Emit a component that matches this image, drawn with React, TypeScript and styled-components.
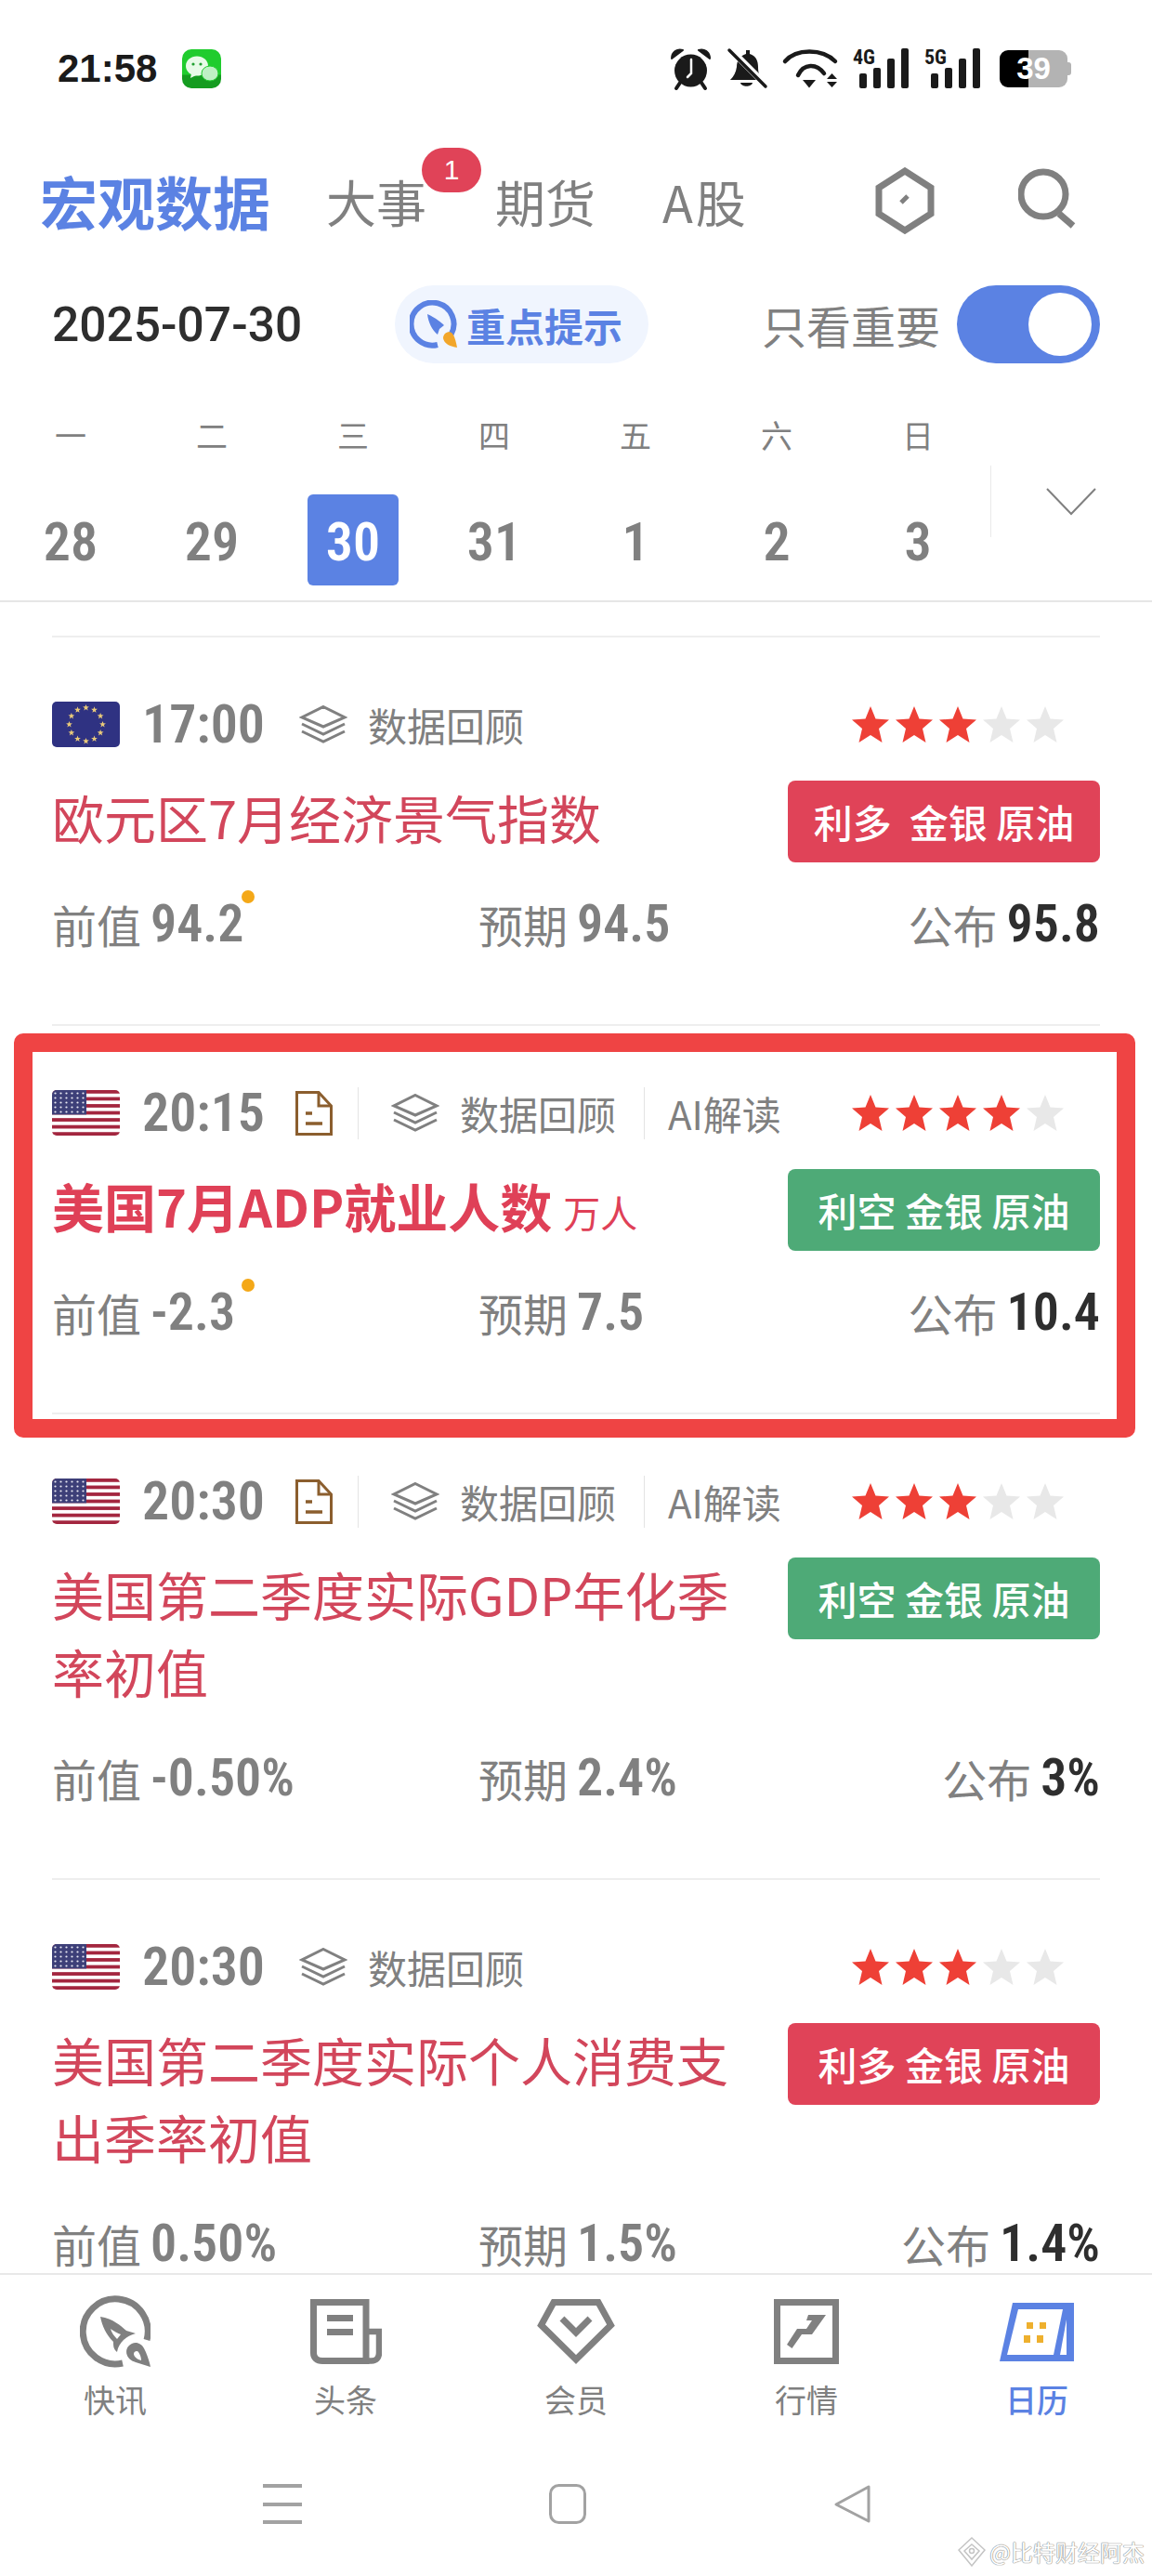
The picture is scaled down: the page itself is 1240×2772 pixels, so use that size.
import React from 'react';
import styled, { createGlobalStyle } from 'styled-components';

const BLUE = '#5b82e3';
const GRAY = '#808080';
const RED = '#e04358';
const GREEN = '#4eaa77';
const CJK = '"Noto Sans CJK SC", "Noto Sans", sans-serif';
const NARROW = 'Roboto, "Liberation Sans", sans-serif';

const Global = createGlobalStyle`
  html, body { margin: 0; padding: 0; background: #fff; }
  body { font-family: ${CJK}; }
`;

const Page = styled.div`
  position: relative;
  width: 1240px;
  height: 2772px;
  display: flex;
  flex-direction: column;
  overflow: hidden;
  background: #fff;
`;

/* ---------- status bar ---------- */
const StatusBar = styled.div`
  height: 148px;
  flex: none;
  display: flex;
  align-items: center;
  padding: 0 87px 0 62px;
  box-sizing: border-box;
`;
const Clock = styled.span`
  font: bold 42px/1 "Liberation Sans", sans-serif;
  color: #1a1a1a;
  width: 134px;
`;
const StatusIcons = styled.div`
  margin-left: auto;
  display: flex;
  align-items: center;
`;
const StatusIcon = styled.svg<{ $ml?: number }>`
  display: block;
  overflow: visible;
  margin-left: ${p => p.$ml ?? 0}px;
`;
const Battery = styled.div`
  position: relative;
  width: 73px;
  height: 40px;
  margin-left: 20px;
  margin-right: 4px;
  border-radius: 9px;
  background: linear-gradient(to right, #000 31px, #b3b3b3 31px);
  color: #fff;
  font: bold 33px/40px "Liberation Sans", sans-serif;
  text-align: center;
  &::after {
    content: '';
    position: absolute;
    right: -4px;
    top: 13px;
    width: 4px;
    height: 14px;
    border-radius: 0 3px 3px 0;
    background: #b3b3b3;
  }
`;

/* ---------- top nav ---------- */
const TopNav = styled.div`
  height: 136px;
  flex: none;
  display: flex;
  align-items: center;
  padding: 0 82px 0 43px;
  box-sizing: border-box;
`;
const NavActive = styled.span`
  font-size: 62px;
  line-height: 80px;
  font-weight: 700;
  color: ${BLUE};
`;
const NavTab = styled.span<{ $ml: number; $spaced?: boolean }>`
  position: relative;
  font-size: 54px;
  line-height: 80px;
  color: ${GRAY};
  margin-left: ${p => p.$ml}px;
  margin-top: 2px;
  letter-spacing: ${p => (p.$spaced ? 3 : 0)}px;
`;
const Badge = styled.span`
  position: absolute;
  left: 103px;
  top: -18px;
  width: 64px;
  height: 48px;
  border-radius: 24px;
  background: ${RED};
  color: #fff;
  font: 30px/48px "Liberation Sans", sans-serif;
  text-align: center;
`;
const NavIcons = styled.div`
  margin-left: auto;
  display: flex;
  gap: 90px;
`;
const BlockSvg = styled.svg`
  display: block;
`;

/* ---------- date row ---------- */
const DateRow = styled.div`
  flex: none;
  height: 84px;
  margin-top: 23px;
  padding: 0 56px;
  display: flex;
  align-items: center;
`;
const DateText = styled.span`
  width: 369px;
  margin-top: 2px;
  font: 500 51.5px/1 Roboto, sans-serif;
  color: #2e2e2e;
`;
const HintPill = styled.div`
  width: 273px;
  height: 84px;
  box-sizing: border-box;
  padding-left: 16px;
  border-radius: 42px;
  background: #f0f5fe;
  display: flex;
  align-items: center;
  gap: 9px;
  font-size: 42px;
  font-weight: 700;
  color: ${BLUE};
`;
const OnlyImportant = styled.div`
  margin-left: auto;
  display: flex;
  align-items: center;
  gap: 18px;
  font-size: 48px;
  color: ${GRAY};
`;
const Toggle = styled.div`
  position: relative;
  width: 154px;
  height: 84px;
  border-radius: 42px;
  background: ${BLUE};
  &::after {
    content: '';
    position: absolute;
    right: 9px;
    top: 8px;
    width: 68px;
    height: 68px;
    border-radius: 50%;
    background: #fff;
  }
`;

/* ---------- calendar ---------- */
const Calendar = styled.div`
  flex: none;
  margin-top: 58px;
  display: flex;
  padding-bottom: 16px;
  border-bottom: 2px solid #e6e6e6;
`;
const Days = styled.div`
  width: 1064px;
`;
const WeekRow = styled.div`
  display: grid;
  grid-template-columns: repeat(7, 152px);
  height: 40px;
  margin-bottom: 43px;
`;
const WeekCell = styled.span`
  font-size: 34px;
  line-height: 38px;
  color: ${GRAY};
  text-align: center;
`;
const DayRow = styled.div`
  display: grid;
  grid-template-columns: repeat(7, 152px);
  height: 98px;
`;
const DayCell = styled.div<{ $on?: boolean }>`
  justify-self: center;
  width: 98px;
  height: 98px;
  border-radius: 6px;
  background: ${p => (p.$on ? BLUE : 'transparent')};
  color: ${p => (p.$on ? '#fff' : GRAY)};
  font: 600 58px/102px ${NARROW};
  font-stretch: 75%;
  text-align: center;
`;
const Expand = styled.div`
  margin: 52px 0 0 2px;
  width: 172px;
  height: 77px;
  border-left: 1px solid #eaeaea;
  display: flex;
  align-items: center;
  justify-content: center;
`;

/* ---------- list ---------- */
const List = styled.div`
  flex: 1;
  min-height: 0;
  overflow: hidden;
  margin-top: 36px;
  padding: 0 56px;
`;
const Card = styled.div`
  position: relative;
  border-top: 2px solid #eeeeee;
  padding: 69px 0 78px;
`;
const Highlight = styled.div`
  position: absolute;
  left: -41px;
  top: 8px;
  width: 1207px;
  height: 435px;
  box-sizing: border-box;
  border: 20px solid #ef4444;
  border-radius: 10px;
  pointer-events: none;
`;
const Meta = styled.div`
  height: 49px;
  display: flex;
  align-items: center;
`;
const Flag = styled.svg`
  display: block;
  flex: none;
  border-radius: 5px;
`;
const Time = styled.span`
  width: 122px;
  margin-left: 24px;
  font: 600 58px/49px ${NARROW};
  font-stretch: 75%;
  color: ${GRAY};
  white-space: nowrap;
`;
const MetaSvg = styled.svg<{ $ml: number }>`
  display: block;
  flex: none;
  margin-left: ${p => p.$ml}px;
`;
const Sep = styled.span<{ $ml: number }>`
  flex: none;
  width: 1px;
  height: 56px;
  background: #e4e4e4;
  margin-left: ${p => p.$ml}px;
`;
const MetaText = styled.span<{ $ml: number }>`
  margin-left: ${p => p.$ml}px;
  font-size: 42px;
  line-height: 49px;
  color: ${GRAY};
  white-space: nowrap;
`;
const Stars = styled.div`
  margin-left: auto;
  margin-right: 39px;
  display: flex;
  gap: 7px;
`;
const Body = styled.div`
  margin-top: 36px;
  display: flex;
  justify-content: space-between;
  align-items: flex-start;
`;
const Title = styled.div<{ $strong?: boolean }>`
  width: 770px;
  margin-top: -3px;
  font-size: 56px;
  line-height: 83px;
  padding-bottom: 9px;
  color: ${p => (p.$strong ? '#df4057' : '#d2465b')};
  font-weight: ${p => (p.$strong ? 700 : 400)};
`;
const Unit = styled.span`
  margin-left: 12px;
  font-size: 40px;
  line-height: 40px;
  font-weight: 400;
`;
const Impact = styled.div<{ $bull: boolean }>`
  flex: none;
  width: 336px;
  height: 88px;
  border-radius: 8px;
  background: ${p => (p.$bull ? RED : GREEN)};
  color: #fff;
  font-size: 42px;
  font-weight: 500;
  line-height: 88px;
  text-align: center;
  white-space: pre;
`;
const Stats = styled.div`
  margin-top: 35px;
  height: 60px;
  display: grid;
  grid-template-columns: 459px 1fr auto;
  align-items: center;
`;
const Stat = styled.div`
  position: relative;
  display: flex;
  align-items: center;
  height: 60px;
  font-size: 48px;
  line-height: 60px;
  color: ${GRAY};
`;
const StatValue = styled.span<{ $dark?: boolean }>`
  margin-left: 10px;
  font: 600 56px/60px ${NARROW};
  font-stretch: 75%;
  color: ${p => (p.$dark ? '#2e2e2e' : GRAY)};
`;
const Dot = styled.span`
  position: absolute;
  left: 204px;
  top: -6px;
  width: 14px;
  height: 14px;
  border-radius: 50%;
  background: #f4a818;
`;

/* ---------- tab bar ---------- */
const TabBar = styled.div`
  flex: none;
  height: 194px;
  box-sizing: border-box;
  border-top: 2px solid #e8e8e8;
  background: #fff;
  padding-top: 22px;
  display: grid;
  grid-template-columns: repeat(5, 248px);
`;
const Tab = styled.div<{ $on?: boolean }>`
  display: flex;
  flex-direction: column;
  align-items: center;
  font-size: 34px;
  line-height: 40px;
  font-weight: ${p => (p.$on ? 500 : 400)};
  color: ${p => (p.$on ? BLUE : GRAY)};
`;
const TabIconBox = styled.div`
  height: 78px;
  margin-bottom: 14px;
  display: flex;
  align-items: center;
  justify-content: center;
`;

/* ---------- system bar ---------- */
const SystemBar = styled.div`
  flex: none;
  height: 132px;
  box-sizing: border-box;
  padding: 33px 0 0 283px;
  display: flex;
  align-items: flex-start;
  gap: 266px;
`;
const Watermark = styled.div`
  position: absolute;
  right: 8px;
  bottom: 10px;
  display: flex;
  align-items: center;
  gap: 4px;
  font-size: 24px;
  line-height: 30px;
  color: #fff;
  text-shadow: 0 0 1px #8a8a8a, 0 0 1px #8a8a8a, 0 0 1px #8a8a8a;
`;

/* ---------- drawings ---------- */
const WeChat = () => (
  <StatusIcon width="42" height="42" viewBox="0 0 42 42">
    <defs>
      <linearGradient id="wc" x1="0" y1="0" x2="0" y2="1">
        <stop offset="0" stopColor="#20cc2e" />
        <stop offset="0.65" stopColor="#20cc2e" />
        <stop offset="0.66" stopColor="#159c20" />
        <stop offset="1" stopColor="#159c20" />
      </linearGradient>
    </defs>
    <rect width="42" height="42" rx="10" fill="url(#wc)" />
    <ellipse cx="16" cy="18" rx="12" ry="10.5" fill="#e8fbe8" />
    <path d="M10 26l-1 5 6-3z" fill="#e8fbe8" />
    <ellipse cx="30" cy="26" rx="9" ry="8" fill="#bff0c4" stroke="#20cc2e" strokeWidth="1" />
    <circle cx="12" cy="16" r="1.6" fill="#20a030" />
    <circle cx="20" cy="16" r="1.6" fill="#20a030" />
  </StatusIcon>
);

const Alarm = () => (
  <StatusIcon width="43" height="44" viewBox="0 0 43 44" fill="#1a1a1a">
    <path d="M1 11 C1 4 7 0 13 2 Z" stroke="#1a1a1a" strokeWidth="2" strokeLinejoin="round" />
    <path d="M42 11 C42 4 36 0 30 2 Z" stroke="#1a1a1a" strokeWidth="2" strokeLinejoin="round" />
    <circle cx="21.5" cy="24" r="17.5" />
    <path d="M10 37l-4 6M33 37l4 6" stroke="#1a1a1a" strokeWidth="4" strokeLinecap="round" />
    <path d="M22 12v15l-4 4" stroke="#fff" strokeWidth="2.5" fill="none" strokeLinecap="round" />
  </StatusIcon>
);

const BellOff = () => (
  <StatusIcon $ml={18} width="42" height="42" viewBox="0 0 42 42" fill="#1a1a1a">
    <path d="M20 1h4v4c7 2 9 8 9 14 0 6 1 9 5 14H3c4-4 6-8 7-14 0-6 3-12 10-14z" />
    <path d="M14 36h13c-1 5-12 5-13 0z" />
    <path d="M3 0L42 39" stroke="#fff" strokeWidth="7" />
    <path d="M2 1L41 40" stroke="#1a1a1a" strokeWidth="3.5" strokeLinecap="round" />
  </StatusIcon>
);

const Wifi = () => (
  <StatusIcon $ml={18} width="59" height="42" viewBox="0 0 59 42" fill="#1a1a1a">
    <path d="M2 13 C14 -1 42 -1 56 13" stroke="#1a1a1a" strokeWidth="4.5" fill="none" strokeLinecap="round" />
    <path d="M16 28 C22 15 36 15 44 26" stroke="#1a1a1a" strokeWidth="4.5" fill="none" strokeLinecap="round" />
    <path d="M21 33h14l-7 8.5z" />
    <path d="M47 32l5.5-6 5.5 6zM47 35l5.5 6 5.5-6z" />
  </StatusIcon>
);

const Signal = ({ label }: { label: string }) => (
  <StatusIcon $ml={16} width="61" height="44" viewBox="0 0 61 44" fill="#1a1a1a">
    <text x="0" y="17" fontFamily={NARROW} fontWeight="700" fontSize="22" style={{ fontStretch: '75%' }}>{label}</text>
    <rect x="7" y="27" width="8" height="16" rx="2" />
    <rect x="22" y="21" width="8" height="22" rx="2" />
    <rect x="37" y="11" width="8" height="32" rx="2" />
    <rect x="52" y="0" width="8" height="43" rx="2" />
  </StatusIcon>
);

const HexIcon = () => (
  <BlockSvg width="64" height="72" viewBox="0 0 64 72" fill="none">
    <path d="M32 4 L60 22 V50 L32 68 L4 50 V22 Z" stroke={GRAY} strokeWidth="7" strokeLinejoin="miter" />
    <path d="M28 38 L35 31" stroke={GRAY} strokeWidth="5" />
  </BlockSvg>
);

const SearchIcon = () => (
  <BlockSvg width="62" height="72" viewBox="0 0 62 72" fill="none">
    <circle cx="27" cy="29" r="24" stroke={GRAY} strokeWidth="7" />
    <path d="M44 50 L59 63" stroke={GRAY} strokeWidth="7" />
  </BlockSvg>
);

const PillIcon = () => (
  <BlockSvg width="52" height="52" viewBox="0 0 52 52" fill="none">
    <path d="M44.5 37 A23 23 0 1 0 30 48" stroke={BLUE} strokeWidth="6" />
    <path d="M19 15 C28 19 34 24 37 27 L32 31 L30 37 C24 32 20 24 19 15 Z" fill={BLUE} />
    <path d="M51 51 C44 50 37 47 36 41 C36 35 43 32 46 36 C49 40 50 46 51 51 Z" fill="#f2a62a" />
  </BlockSvg>
);

const Chevron = () => (
  <BlockSvg width="54" height="30" viewBox="0 0 54 30" fill="none">
    <path d="M1 1 L27 28 L53 1" stroke={GRAY} strokeWidth="2" />
  </BlockSvg>
);

const EuFlag = () => (
  <Flag width="73" height="49" viewBox="0 0 73 49">
    <rect width="73" height="49" fill="#2f3282" />
    {Array.from({ length: 12 }).map((_, i) => {
      const a = (i * Math.PI) / 6;
      const cx = 36.5 + 18 * Math.sin(a);
      const cy = 24.5 - 18 * Math.cos(a);
      const pts = Array.from({ length: 10 })
        .map((__, k) => {
          const r = k % 2 ? 1.5 : 3.6;
          const b = (k * Math.PI) / 5;
          return `${(cx + r * Math.sin(b)).toFixed(1)},${(cy - r * Math.cos(b)).toFixed(1)}`;
        })
        .join(' ');
      return <polygon key={i} points={pts} fill="#e8c97a" />;
    })}
  </Flag>
);

const UsFlag = () => (
  <Flag width="73" height="49" viewBox="0 0 73 49">
    <rect width="73" height="49" fill="#fff" />
    {Array.from({ length: 7 }).map((_, i) => (
      <rect key={i} y={i * 7.54} width="73" height="3.77" fill="#a3263f" />
    ))}
    <rect width="37" height="26.4" fill="#3d3f78" />
    {Array.from({ length: 5 }).map((_, r) =>
      Array.from({ length: 6 }).map((__, c) => (
        <circle key={`${r}-${c}`} cx={3.5 + c * 6} cy={3.5 + r * 5} r="1.1" fill="#e8e8f2" />
      ))
    )}
  </Flag>
);

const DocIcon = () => (
  <MetaSvg $ml={43} width="40" height="48" viewBox="0 0 40 48" fill="none">
    <path d="M1.5 1.5 H25 L38.5 16 V46.5 H1.5 Z" stroke="#8b5e2e" strokeWidth="3" />
    <path d="M25 1.5 V16 H38.5" stroke="#8b5e2e" strokeWidth="3" />
    <path d="M11 24 H18 M11 35 H29" stroke="#8b5e2e" strokeWidth="3.5" />
  </MetaSvg>
);

const LayersIcon = ({ ml }: { ml: number }) => (
  <MetaSvg $ml={ml} width="52" height="41" viewBox="0 0 52 41" fill="none">
    <path d="M26 1.5 L49 13 L26 23 L3 13 Z" stroke={GRAY} strokeWidth="3" />
    <path d="M3 20 L26 31 L49 20" stroke={GRAY} strokeWidth="3" />
    <path d="M3 28 L26 39 L49 28" stroke={GRAY} strokeWidth="3" />
  </MetaSvg>
);

const StarIcon = ({ on }: { on: boolean }) => (
  <BlockSvg width="40" height="39" viewBox="0 0 40 39">
    <polygon
      points="20,0 25.5,13.5 40,14.5 29,24 32.5,39 20,31 7.5,39 11,24 0,14.5 14.5,13.5"
      fill={on ? '#ee4036' : '#e8e8e8'}
    />
  </BlockSvg>
);

const RocketTab = () => (
  <BlockSvg width="76" height="78" viewBox="0 0 76 78" fill="none">
    <path d="M72 48 A35 35 0 1 0 46 73" stroke={GRAY} strokeWidth="7" />
    <path
      fillRule="evenodd"
      fill={GRAY}
      d="M22 23 C36 25 44 33 50 38 L60 41 C50 44 42 50 40 61 C36 58 36 54 36 50 C28 42 24 33 22 23 Z M33 36 C36 38 41 41 44 42 L40 47 C37 44 34 40 33 36 Z"
    />
    <path
      fillRule="evenodd"
      fill={GRAY}
      d="M76 77 L60 72 C50 69 48 60 52 55 C58 48 66 51 69 57 C73 65 75 72 76 77 Z M66 70 C62 69 58 66 58 63 C58 60 62 59 63 61 C65 64 66 67 66 70 Z"
    />
  </BlockSvg>
);

const NewsTab = () => (
  <BlockSvg width="77" height="70" viewBox="0 0 77 70" fill="none">
    <path d="M3.5 3.5 H60 V66.5 H13 C7 66.5 3.5 63 3.5 58 Z" stroke={GRAY} strokeWidth="7" />
    <path d="M18 20.5 H46 M18 35.5 H46" stroke={GRAY} strokeWidth="7" />
    <path d="M60 35 H74 V58 C74 63 71 66.5 66 66.5 H60" stroke={GRAY} strokeWidth="6.5" />
  </BlockSvg>
);

const VipTab = () => (
  <BlockSvg width="84" height="70" viewBox="0 0 84 70" fill="none">
    <path d="M18 3.5 H66 L79.5 28 L42 65 L4.5 28 Z" stroke={GRAY} strokeWidth="7" />
    <path d="M27 21 L42 36 L57 21" stroke={GRAY} strokeWidth="7" />
  </BlockSvg>
);

const MarketTab = () => (
  <BlockSvg width="70" height="70" viewBox="0 0 70 70" fill="none">
    <rect x="3.5" y="3.5" width="63" height="63" stroke={GRAY} strokeWidth="7" />
    <polygon points="37,17 56,17 41,38 30,38 19.5,53 14,49 25,32 35,32 41,23 35,23" fill={GRAY} />
  </BlockSvg>
);

const CalendarTab = () => (
  <BlockSvg width="80" height="63" viewBox="0 0 80 63">
    <polygon points="14,0 80,0 80,63 0,63" fill={BLUE} />
    <polygon points="20,7 68,7 58,56 8,56" fill="#fff" />
    <polygon points="72,18 72,56 65,56" fill="#fff" />
    <rect x="29" y="21" width="7" height="7" fill="#eeb02e" />
    <rect x="43" y="21" width="7" height="7" fill="#eeb02e" />
    <rect x="26" y="35" width="7" height="8" fill="#eeb02e" />
    <rect x="40" y="35" width="7" height="8" fill="#eeb02e" />
  </BlockSvg>
);

const MenuKey = () => (
  <BlockSvg width="42" height="44" viewBox="0 0 42 44" fill="#a2a2a2">
    <rect y="0" width="42" height="4" />
    <rect y="20" width="42" height="4" />
    <rect y="39" width="42" height="4" />
  </BlockSvg>
);
const HomeKey = () => (
  <BlockSvg width="40" height="44" viewBox="0 0 40 44" fill="none">
    <rect x="1.5" y="1.5" width="37" height="40" rx="9" stroke="#a2a2a2" strokeWidth="3" />
  </BlockSvg>
);
const BackKey = () => (
  <BlockSvg width="42" height="44" viewBox="0 0 42 44" fill="none">
    <path d="M38 3 V40 L3 22 Z" stroke="#a2a2a2" strokeWidth="3" strokeLinejoin="round" />
  </BlockSvg>
);

const WatermarkLogo = () => (
  <BlockSvg width="30" height="32" viewBox="0 0 30 32" fill="none" stroke="#c4c4c4" strokeWidth="1.5">
    <path d="M15 1 L29 14 L15 31 L1 14 Z" />
    <path d="M15 8 L23 15 L15 24 L7 15 Z" />
    <circle cx="15" cy="15" r="2.5" />
  </BlockSvg>
);

/* ---------- data ---------- */
type Item = {
  flag: 'eu' | 'us';
  time: string;
  report?: boolean;
  stars: number;
  title: string;
  unit?: string;
  strong?: boolean;
  bull: boolean;
  impact: string;
  prev: string;
  dot?: boolean;
  est: string;
  pub: string;
  framed?: boolean;
};

const items: Item[] = [
  { flag: 'eu', time: '17:00', stars: 3, title: '欧元区7月经济景气指数', bull: true, impact: '利多  金银 原油', prev: '94.2', dot: true, est: '94.5', pub: '95.8' },
  { flag: 'us', time: '20:15', report: true, stars: 4, title: '美国7月ADP就业人数', unit: '万人', strong: true, bull: false, impact: '利空 金银 原油', prev: '-2.3', dot: true, est: '7.5', pub: '10.4', framed: true },
  { flag: 'us', time: '20:30', report: true, stars: 3, title: '美国第二季度实际GDP年化季率初值', bull: false, impact: '利空 金银 原油', prev: '-0.50%', est: '2.4%', pub: '3%' },
  { flag: 'us', time: '20:30', stars: 3, title: '美国第二季度实际个人消费支出季率初值', bull: true, impact: '利多 金银 原油', prev: '0.50%', est: '1.5%', pub: '1.4%' },
];

const weeks = ['一', '二', '三', '四', '五', '六', '日'];
const dates = ['28', '29', '30', '31', '1', '2', '3'];

export default function App() {
  return (
    <Page>
      <Global />
      <StatusBar>
        <Clock>21:58</Clock>
        <WeChat />
        <StatusIcons>
          <Alarm />
          <BellOff />
          <Wifi />
          <Signal label="4G" />
          <Signal label="5G" />
          <Battery>39</Battery>
        </StatusIcons>
      </StatusBar>

      <TopNav>
        <NavActive>宏观数据</NavActive>
        <NavTab $ml={60}>
          大事
          <Badge>1</Badge>
        </NavTab>
        <NavTab $ml={74}>期货</NavTab>
        <NavTab $ml={72} $spaced>A股</NavTab>
        <NavIcons>
          <HexIcon />
          <SearchIcon />
        </NavIcons>
      </TopNav>

      <DateRow>
        <DateText>2025-07-30</DateText>
        <HintPill>
          <PillIcon />
          重点提示
        </HintPill>
        <OnlyImportant>
          只看重要
          <Toggle />
        </OnlyImportant>
      </DateRow>

      <Calendar>
        <Days>
          <WeekRow>
            {weeks.map(w => (
              <WeekCell key={w}>{w}</WeekCell>
            ))}
          </WeekRow>
          <DayRow>
            {dates.map(d => (
              <DayCell key={d} $on={d === '30'}>
                {d}
              </DayCell>
            ))}
          </DayRow>
        </Days>
        <Expand>
          <Chevron />
        </Expand>
      </Calendar>

      <List>
        {items.map((it, i) => (
          <Card key={i}>
            <Meta>
              {it.flag === 'eu' ? <EuFlag /> : <UsFlag />}
              <Time>{it.time}</Time>
              {it.report ? (
                <>
                  <DocIcon />
                  <Sep $ml={27} />
                  <LayersIcon ml={35} />
                  <MetaText $ml={22}>数据回顾</MetaText>
                  <Sep $ml={30} />
                  <MetaText $ml={25}>AI解读</MetaText>
                </>
              ) : (
                <>
                  <LayersIcon ml={47} />
                  <MetaText $ml={22}>数据回顾</MetaText>
                </>
              )}
              <Stars>
                {[0, 1, 2, 3, 4].map(n => (
                  <StarIcon key={n} on={n < it.stars} />
                ))}
              </Stars>
            </Meta>
            <Body>
              <Title $strong={it.strong}>
                {it.title}
                {it.unit && <Unit>{it.unit}</Unit>}
              </Title>
              <Impact $bull={it.bull}>{it.impact}</Impact>
            </Body>
            <Stats>
              <Stat>
                前值
                <StatValue>{it.prev}</StatValue>
                {it.dot && <Dot />}
              </Stat>
              <Stat>
                预期
                <StatValue>{it.est}</StatValue>
              </Stat>
              <Stat>
                公布
                <StatValue $dark>{it.pub}</StatValue>
              </Stat>
            </Stats>
            {it.framed && <Highlight />}
          </Card>
        ))}
      </List>

      <TabBar>
        <Tab>
          <TabIconBox><RocketTab /></TabIconBox>
          快讯
        </Tab>
        <Tab>
          <TabIconBox><NewsTab /></TabIconBox>
          头条
        </Tab>
        <Tab>
          <TabIconBox><VipTab /></TabIconBox>
          会员
        </Tab>
        <Tab>
          <TabIconBox><MarketTab /></TabIconBox>
          行情
        </Tab>
        <Tab $on>
          <TabIconBox><CalendarTab /></TabIconBox>
          日历
        </Tab>
      </TabBar>

      <SystemBar>
        <MenuKey />
        <HomeKey />
        <BackKey />
      </SystemBar>

      <Watermark>
        <WatermarkLogo />
        @比特财经阿杰
      </Watermark>
    </Page>
  );
}
